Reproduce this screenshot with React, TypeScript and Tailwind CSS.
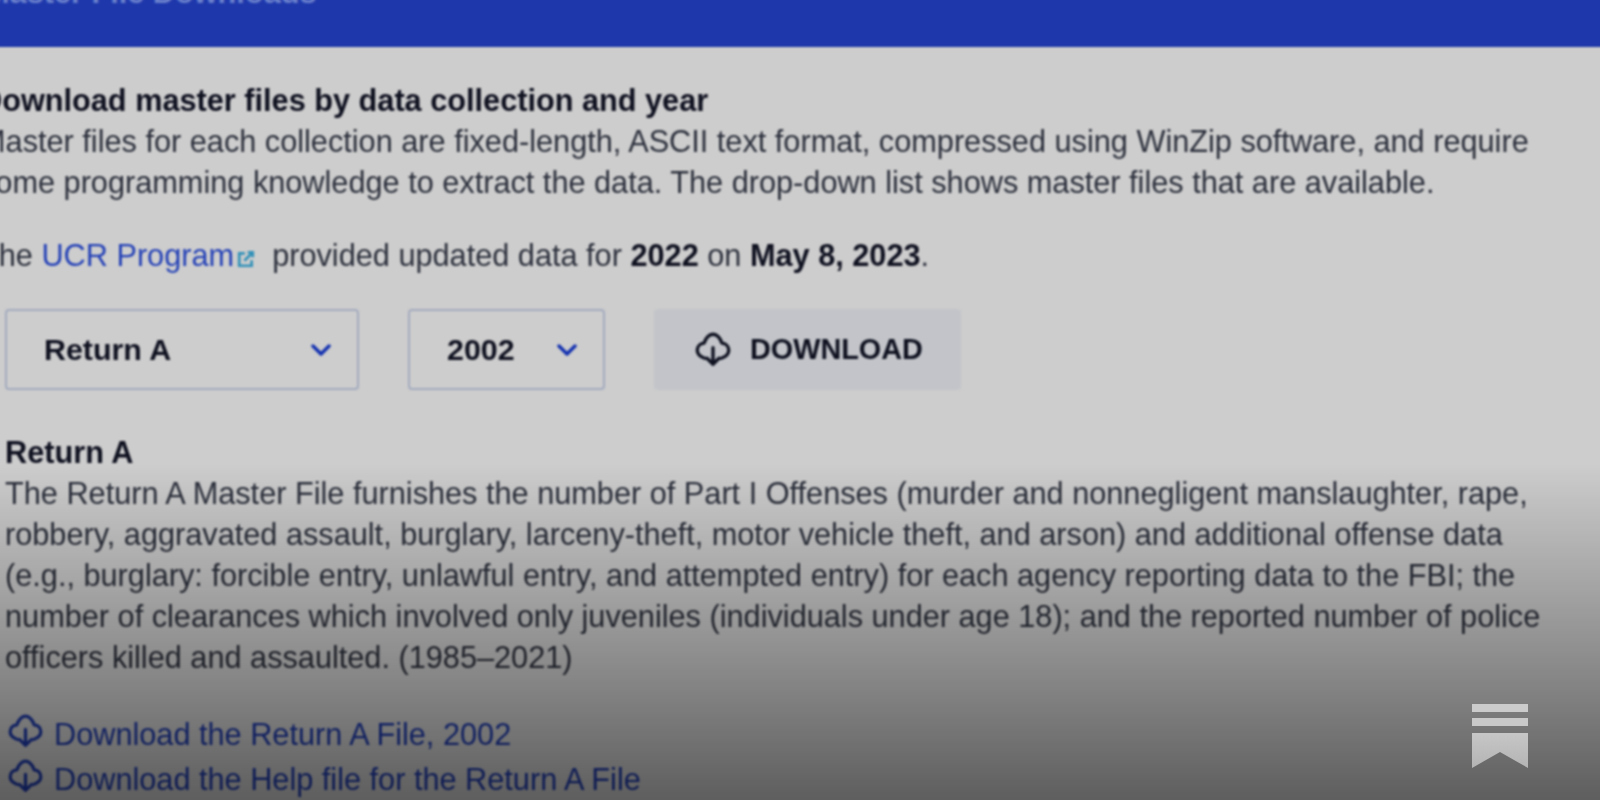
const CloudIcon = ({ className }: { className: string }) => (
  <svg viewBox="0 0 24 24" fill="none" stroke="currentColor" strokeWidth="2.200" strokeLinecap="round" strokeLinejoin="round" className={className}>
    <path d="M6.500 17.500C3.500 16.500 1.500 14.600 1.500 12.200c0-2.600 2-4.600 4.600-4.800C7 4.400 9.300 1.500 12 1.500s5 2.900 5.900 5.900c2.600.2 4.600 2.200 4.600 4.800 0 2.400-2 4.300-5 5.300" />
    <path d="M12 10.500v11M8 17.500l4 4 4-4" />
  </svg>
);

const Chevron = () => (
  <svg viewBox="0 0 20 12" fill="none" stroke="currentColor" strokeWidth="3.500" strokeLinecap="round" strokeLinejoin="round" className="w-5 h-3 text-[#1532b0]">
    <path d="M2 2l8 8 8-8" />
  </svg>
);

const ExternalIcon = () => (
  <svg viewBox="0 0 16 16" fill="none" stroke="currentColor" strokeWidth="2.400" className="inline-block w-[18px] h-[18px] ml-[3px] -mb-[3px] text-[#3391b8]">
    <path d="M7 3H2v11h11V9" />
    <path d="M6.500 9.500 14 2M9.500 2H14v4.500" />
  </svg>
);

const App = () => {
  return (
    <div className="relative w-[1600px] h-[800px] overflow-hidden bg-[#cdcdcd] font-['Liberation_Sans',Arial,sans-serif]">
      <div className="blur-[1px]">
        <header className="-mx-4 -mt-4 h-[63px] bg-[#1e38ac] border-b-2 border-[#1a35a8] overflow-hidden">
          <p className="-mt-[7px] text-[30.700px] leading-[32px] font-bold text-[#6a80cc]">Master File Downloads</p>
        </header>

        <section className="-ml-[20px] mt-[33px] w-[1650px] text-[30.700px] leading-[41px] text-[#2c303c]">
          <h2 className="font-bold text-[#0f1120]">Download master files by data collection and year</h2>
          <p>Master files for each collection are fixed-length, ASCII text format, compressed using WinZip software, and require</p>
          <p>some programming knowledge to extract the data. The drop-down list shows master files that are available.</p>
          <p className="mt-[32px]">
            The <span className="text-[#2441b6]">UCR Program</span>
            <ExternalIcon />
            {' '}&nbsp;provided updated data for <b className="text-[#0f1120]">2022</b> on <b className="text-[#0f1120]">May 8, 2023</b>.
          </p>
        </section>

        <div className="flex items-center gap-[49px] ml-[5px] mt-[33px] h-[81px] text-[30.400px] font-bold text-[#0f1120]">
          <div className="flex items-center justify-between w-[354px] h-full pl-[37px] pr-[26px] rounded border-2 border-[#a3abbe]">
            <span>Return A</span>
            <Chevron />
          </div>
          <div className="flex items-center justify-between w-[197px] h-full pl-[37px] pr-[26px] rounded border-2 border-[#a3abbe]">
            <span>2002</span>
            <Chevron />
          </div>
          <div className="flex items-center gap-[19px] w-[307px] h-full pl-[41px] rounded bg-[#c2c4c9]">
            <CloudIcon className="w-9 h-9" />
            <span className="text-[28.800px] mt-px">DOWNLOAD</span>
          </div>
        </div>

        <section className="ml-[5px] mt-[42px] w-[1650px] text-[30.700px] leading-[41px] text-[#2c303c]">
          <h3 className="font-bold text-[#0f1120]">Return A</h3>
          <p>The Return A Master File furnishes the number of Part I Offenses (murder and nonnegligent manslaughter, rape,</p>
          <p>robbery, aggravated assault, burglary, larceny-theft, motor vehicle theft, and arson) and additional offense data</p>
          <p>(e.g., burglary: forcible entry, unlawful entry, and attempted entry) for each agency reporting data to the FBI; the</p>
          <p>number of clearances which involved only juveniles (individuals under age 18); and the reported number of police</p>
          <p>officers killed and assaulted. (1985–2021)</p>
        </section>

        <ul className="ml-[8px] mt-[34px] text-[30.700px] leading-[45px] text-[#1f3aa8]">
          <li className="flex items-center gap-[11px]">
            <CloudIcon className="w-[35px] h-[35px] -mt-[6px]" />
            <span>Download the Return A File, 2002</span>
          </li>
          <li className="flex items-center gap-[11px]">
            <CloudIcon className="w-[35px] h-[35px] -mt-[6px]" />
            <span>Download the Help file for the Return A File</span>
          </li>
        </ul>
      </div>

      <div className="absolute inset-0 bg-gradient-to-b from-transparent from-[58%] to-black/54" />

      <div className="absolute right-[72px] top-[704px] flex flex-col gap-[6px] w-[56px]">
        <div className="h-2 bg-[#cbcbcb]" />
        <div className="h-2 bg-[#c9c9c9]" />
        <svg viewBox="0 0 56 35" className="w-[56px] h-[35px] mt-px">
          <defs>
            <linearGradient id="mark" x1="0" y1="0" x2="0" y2="1">
              <stop offset="0" stopColor="#c6c6c6" />
              <stop offset="1" stopColor="#b4b4b4" />
            </linearGradient>
          </defs>
          <path d="M0 0h56v35L28 19 0 35z" fill="url(#mark)" />
        </svg>
      </div>
    </div>
  );
};

export default App;
